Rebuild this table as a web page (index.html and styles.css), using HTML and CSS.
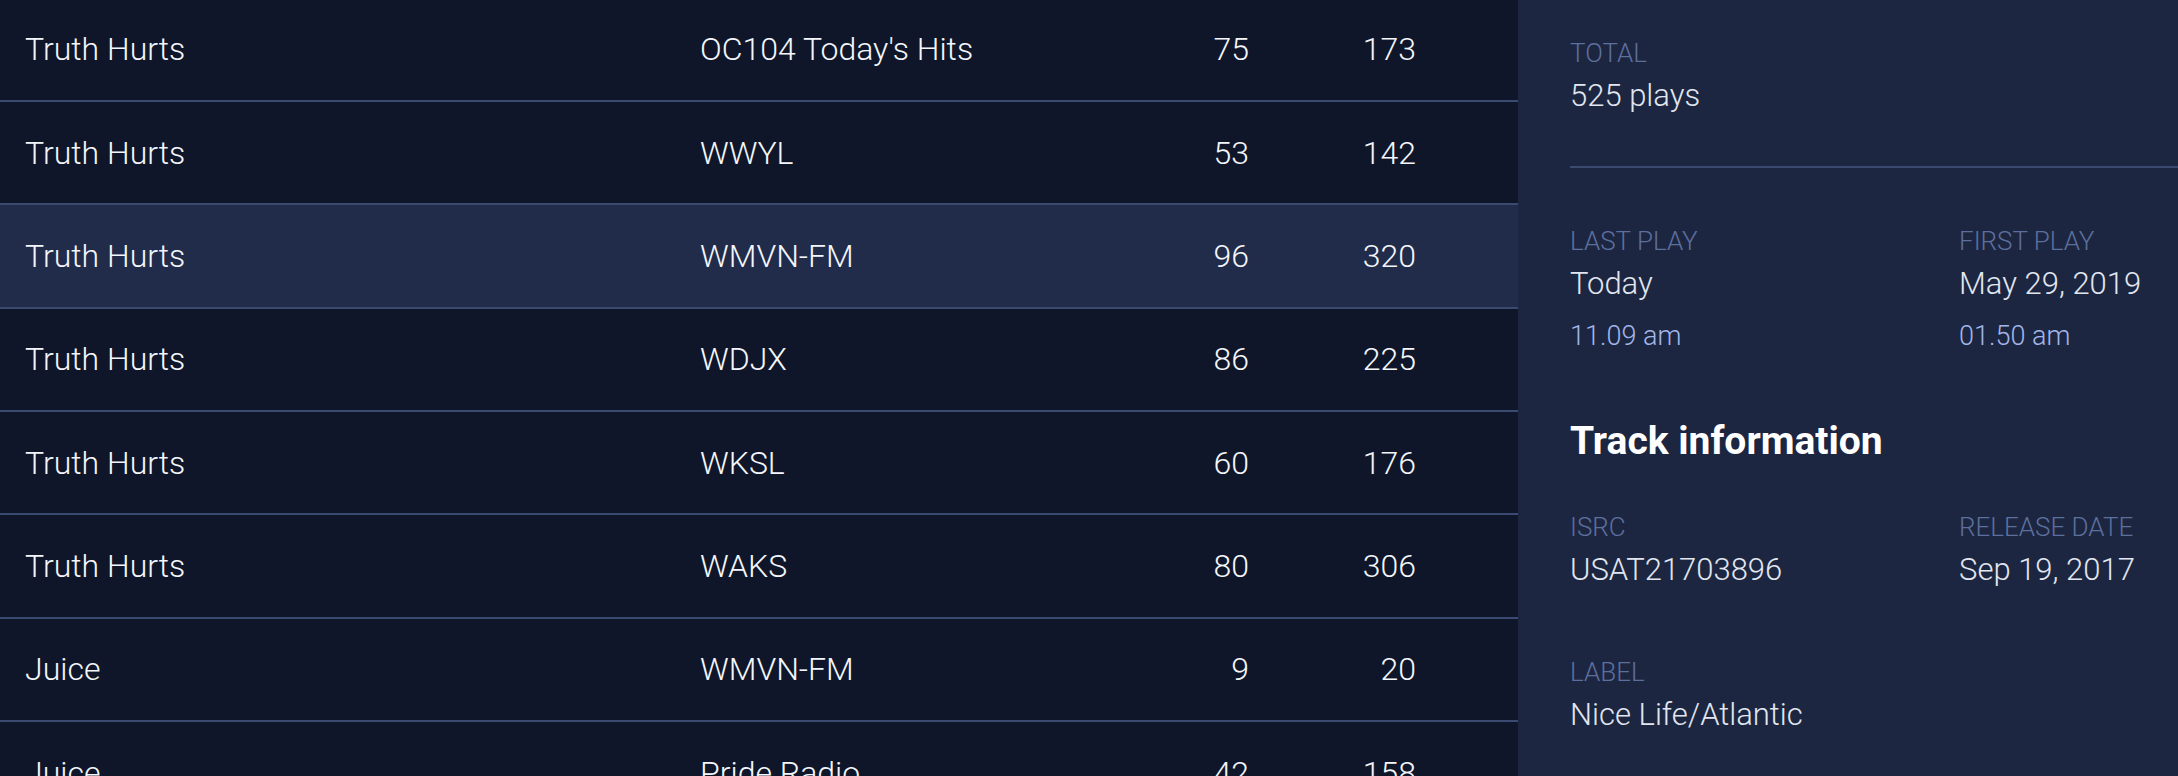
FILE: index.html
```html
<!DOCTYPE html>
<html lang="en">
<head>
<meta charset="utf-8">
<title>Track plays</title>
<link rel="stylesheet" href="styles.css">
</head>
<body>
<div class="page">
  <section class="plays">
    <div class="rows">
      <div class="row"><span class="c-name">Truth Hurts</span><span class="c-station">OC104 Today's Hits</span><span class="c-num">75</span><span class="c-num">173</span></div>
      <div class="row"><span class="c-name">Truth Hurts</span><span class="c-station">WWYL</span><span class="c-num">53</span><span class="c-num">142</span></div>
      <div class="row row-active"><span class="c-name">Truth Hurts</span><span class="c-station">WMVN-FM</span><span class="c-num">96</span><span class="c-num">320</span></div>
      <div class="row"><span class="c-name">Truth Hurts</span><span class="c-station">WDJX</span><span class="c-num">86</span><span class="c-num">225</span></div>
      <div class="row"><span class="c-name">Truth Hurts</span><span class="c-station">WKSL</span><span class="c-num">60</span><span class="c-num">176</span></div>
      <div class="row"><span class="c-name">Truth Hurts</span><span class="c-station">WAKS</span><span class="c-num">80</span><span class="c-num">306</span></div>
      <div class="row"><span class="c-name">Juice</span><span class="c-station">WMVN-FM</span><span class="c-num">9</span><span class="c-num">20</span></div>
      <div class="row"><span class="c-name">Juice</span><span class="c-station">Pride Radio</span><span class="c-num">42</span><span class="c-num">158</span></div>
    </div>
  </section>
  <aside class="details">
    <div class="field">
      <div class="label">TOTAL</div>
      <div class="value">525 plays</div>
    </div>
    <div class="divider"></div>
    <div class="pair pair-plays">
      <div class="field">
        <div class="label">LAST PLAY</div>
        <div class="value">Today</div>
        <div class="time">11.09 am</div>
      </div>
      <div class="field">
        <div class="label">FIRST PLAY</div>
        <div class="value">May 29, 2019</div>
        <div class="time">01.50 am</div>
      </div>
    </div>
    <h2 class="heading">Track information</h2>
    <div class="pair pair-info">
      <div class="field">
        <div class="label">ISRC</div>
        <div class="value">USAT21703896</div>
      </div>
      <div class="field">
        <div class="label">RELEASE DATE</div>
        <div class="value">Sep 19, 2017</div>
      </div>
    </div>
    <div class="field field-label">
      <div class="label">LABEL</div>
      <div class="value">Nice Life/Atlantic</div>
    </div>
  </aside>
</div>
</body>
</html>
```
FILE: styles.css
```css
* { box-sizing: border-box; }
html, body {
  margin: 0;
  padding: 0;
  height: 100%;
}
body {
  font-family: Roboto, "Noto Sans", "Liberation Sans", sans-serif;
  background: #0f1629;
  overflow: hidden;
}
.page {
  display: flex;
  height: 776px;
  overflow: hidden;
}
.plays {
  flex: 1 1 auto;
  background: #0f1629;
  overflow: hidden;
}
.rows {
  margin-top: -1.33px;
}
.row {
  display: grid;
  grid-template-columns: 675px 449px 100px 167px;
  align-items: center;
  height: 103.333px;
  padding: 0 102px 0 25px;
  border-bottom: 2px solid #3a4a70;
  color: #f4f6fb;
  font-size: 32px;
  font-weight: 300;
  line-height: 1;
}
.row-active {
  background: #212c4a;
}
.c-num {
  text-align: right;
}
.details {
  flex: 0 0 660px;
  background: #1c2640;
  padding: 40px 0 0 52px;
  line-height: 1;
  font-weight: 300;
}
.label {
  font-size: 26px;
  color: #5d6f9d;
}
.value {
  font-size: 31px;
  color: #e2e6f0;
  margin-top: 14px;
}
.time {
  font-size: 27px;
  color: #a3b6e9;
  margin-top: 24px;
}
.divider {
  height: 2px;
  background: #3a4a70;
  margin-top: 55px;
}
.pair {
  display: grid;
  grid-template-columns: 389px 1fr;
}
.pair-plays {
  margin-top: 60px;
}
.heading {
  margin: 72px 0 0;
  font-size: 39px;
  font-weight: 700;
  color: #ffffff;
  line-height: 1;
}
.pair-info {
  margin-top: 53px;
}
.field-label {
  margin-top: 74px;
}
.field-label .value {
  margin-top: 14px;
}
```
